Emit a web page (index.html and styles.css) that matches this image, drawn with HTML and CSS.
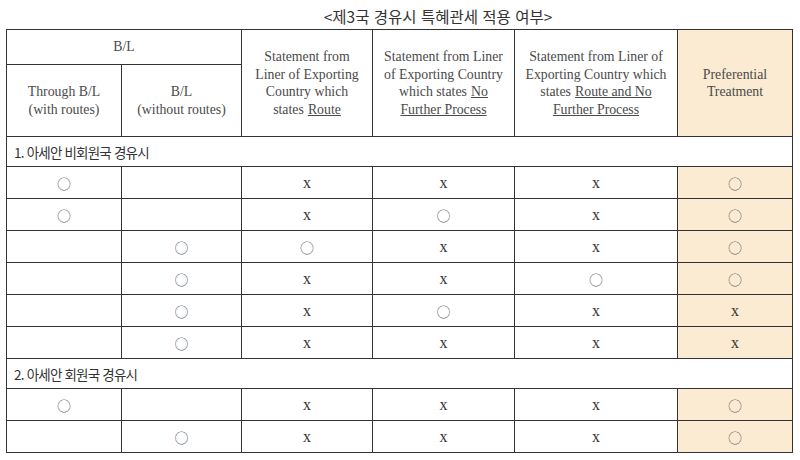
FILE: index.html
```html
<!DOCTYPE html>
<html lang="ko">
<head>
<meta charset="utf-8">
<link rel="stylesheet" href="styles.css">
</head>
<body>
<div class="page">
  <div class="title">&lt;제3국 경유시 특혜관세 적용 여부&gt;</div>
  <table class="grid">
    <colgroup>
      <col class="c1"><col class="c2"><col class="c3"><col class="c4"><col class="c5"><col class="c6">
    </colgroup>
    <thead>
      <tr class="h1">
        <th colspan="2">B/L</th>
        <th rowspan="2">Statement from Liner of Exporting Country which states<u>Route</u></th>
        <th rowspan="2">Statement from Liner of Exporting Country which states<u>No Further Process</u></th>
        <th rowspan="2">Statement from Liner of Exporting Country which states<u>Route and No Further Process</u></th>
        <th rowspan="2" class="pref">Preferential<br>Treatment</th>
      </tr>
      <tr class="h2">
        <th>Through B/L<br>(with routes)</th>
        <th>B/L<br>(without routes)</th>
      </tr>
    </thead>
    <tbody>
      <tr class="group"><td colspan="6">1. 아세안 비회원국 경유시</td></tr>
      <tr><td class="o">○</td><td></td><td class="x">x</td><td class="x">x</td><td class="x">x</td><td class="pref o">○</td></tr>
      <tr><td class="o">○</td><td></td><td class="x">x</td><td class="o">○</td><td class="x">x</td><td class="pref o">○</td></tr>
      <tr><td></td><td class="o">○</td><td class="o">○</td><td class="x">x</td><td class="x">x</td><td class="pref o">○</td></tr>
      <tr><td></td><td class="o">○</td><td class="x">x</td><td class="x">x</td><td class="o">○</td><td class="pref o">○</td></tr>
      <tr><td></td><td class="o">○</td><td class="x">x</td><td class="o">○</td><td class="x">x</td><td class="pref x">x</td></tr>
      <tr><td></td><td class="o">○</td><td class="x">x</td><td class="x">x</td><td class="x">x</td><td class="pref x">x</td></tr>
      <tr class="group"><td colspan="6">2. 아세안 회원국 경유시</td></tr>
      <tr><td class="o">○</td><td></td><td class="x">x</td><td class="x">x</td><td class="x">x</td><td class="pref o">○</td></tr>
      <tr><td></td><td class="o">○</td><td class="x">x</td><td class="x">x</td><td class="x">x</td><td class="pref o">○</td></tr>
    </tbody>
  </table>
</div>
</body>
</html>
```

FILE: styles.css
```css
html, body {
  margin: 0;
  padding: 0;
  background: #ffffff;
}
.page {
  padding: 6px 8px 0 6px;
  width: 786px;
}
.title {
  font-family: "Noto Sans CJK KR", "Noto Sans", sans-serif;
  font-size: 15.5px;
  line-height: 20px;
  color: #333;
  text-align: center;
  padding-left: 78px;
  height: 23px;
}
.grid {
  border-collapse: collapse;
  table-layout: fixed;
  width: 786px;
  border: 1.5px solid #444;
}
.c1 { width: 115px; }
.c2 { width: 120px; }
.c3 { width: 131px; }
.c4 { width: 142px; }
.c5 { width: 163px; }
.c6 { width: 115px; }
.grid th, .grid td {
  border: 1px solid #333;
  padding: 0;
  text-align: center;
  vertical-align: middle;
}
.grid th {
  font-family: "Liberation Serif", "Times New Roman", serif;
  font-weight: normal;
  font-size: 13.8px;
  line-height: 17.5px;
  color: #4a4a4a;
  padding: 0 8px;
}
.grid th u {
  margin-left: 0.3em;
  text-decoration-thickness: 1px;
  text-underline-offset: 1px;
}
.h1 { height: 35px; }
.h2 { height: 72px; }
.grid tbody tr { height: 32px; }
.grid tr.group { height: 30px; }
.group td {
  text-align: left;
  padding-left: 7px;
  font-family: "Noto Sans CJK KR", "Noto Sans", sans-serif;
  font-size: 13.5px;
  color: #333;
  letter-spacing: -0.8px;
}
.pref { background: #fbebd2; }
.o {
  font-family: "Noto Sans CJK KR", sans-serif;
  font-size: 14px;
  color: #666;
}
.x {
  font-family: "Liberation Serif", "Times New Roman", serif;
  font-size: 16px;
  color: #333;
}
```
